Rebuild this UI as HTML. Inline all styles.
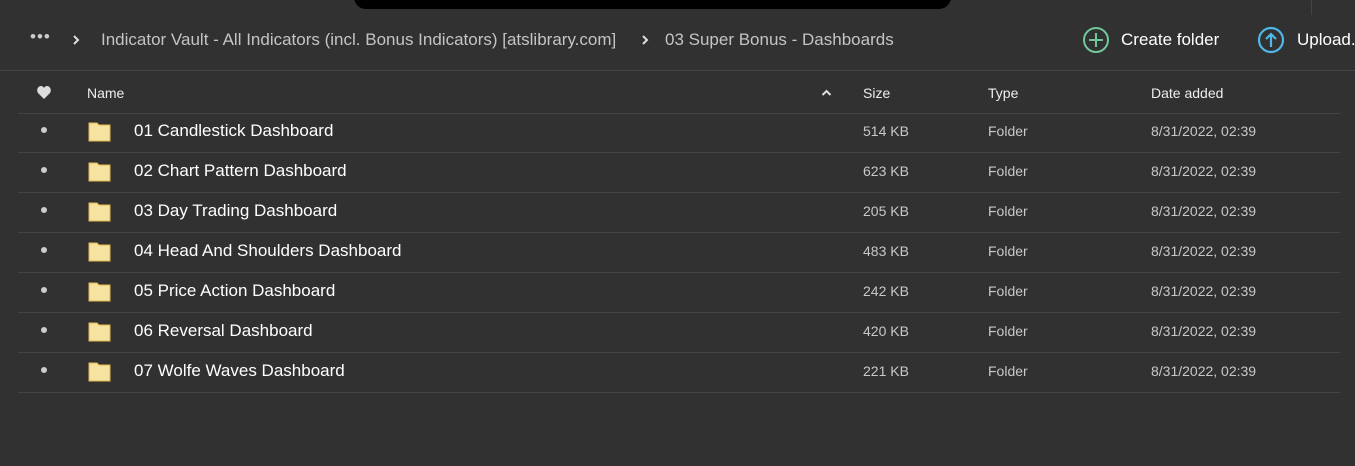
<!DOCTYPE html>
<html><head><meta charset="utf-8"><style>
body{margin:0;width:1355px;height:466px;background:#313131;font-family:"Liberation Sans",sans-serif;position:relative;overflow:hidden;color:#fff}
.pill{position:absolute;left:354px;top:-20px;width:597px;height:29px;background:#000;border-radius:12px}
.vl{position:absolute;left:1311px;top:0;width:1px;height:15px;background:#444}
.crumb{position:absolute;top:30px;font-size:17px;color:#c4c4c4;white-space:nowrap}
.hl{position:absolute;height:1px;background:#444}
.h{position:absolute;top:85px;font-size:14px;color:#eee}
.r{position:absolute;left:0;width:1355px;height:40px}
.r span{position:absolute;top:11px;white-space:nowrap}
.n{left:134px;font-size:17px;color:#fff;top:9px!important}
.s{font-size:14px;color:#c8c8c8;top:11px!important}
.dot{position:absolute;left:41px;top:15px;width:6px;height:6px;border-radius:50%;background:#ccc}
.f{position:absolute;left:88px;top:9px;width:23px;height:21px}
</style></head><body>
<div class="pill"></div><div class="vl"></div>
<div class="crumb" style="left:30px;top:27px;color:#ccc;letter-spacing:1px">•••</div>
<svg style="position:absolute;left:72px;top:34px" width="8" height="12" viewBox="0 0 8 12"><path d="M2 2l4 4-4 4" stroke="#ddd" stroke-width="2" fill="none"/></svg>
<div class="crumb" style="left:101px">Indicator Vault - All Indicators (incl. Bonus Indicators) [atslibrary.com]</div>
<svg style="position:absolute;left:641px;top:34px" width="8" height="12" viewBox="0 0 8 12"><path d="M2 2l4 4-4 4" stroke="#ddd" stroke-width="2" fill="none"/></svg>
<div class="crumb" style="left:665px">03 Super Bonus - Dashboards</div>
<svg style="position:absolute;left:1082px;top:26px" width="28" height="28" viewBox="0 0 28 28"><circle cx="14" cy="14" r="12" fill="none" stroke="#6fc79a" stroke-width="2"/><path d="M14 7v14M7 14h14" stroke="#6fc79a" stroke-width="2"/></svg>
<div class="crumb" style="left:1121px;color:#fff">Create folder</div>
<svg style="position:absolute;left:1257px;top:26px" width="28" height="28" viewBox="0 0 28 28"><circle cx="14" cy="14" r="12" fill="none" stroke="#4fb8e8" stroke-width="2.2"/><path d="M14 21V8M9 13l5-5 5 5" stroke="#4fb8e8" stroke-width="2.2" fill="none"/></svg>
<div class="crumb" style="left:1297px;color:#fff">Upload...</div>
<div class="hl" style="left:0;width:1355px;top:70px"></div>
<svg style="position:absolute;left:37px;top:86px" width="14" height="13" viewBox="0 0 14 13"><path d="M7 13L1 7C-1 4 1 0 4 0c1.5 0 2.5 1 3 2 .5-1 1.5-2 3-2 3 0 5 4 3 7z" fill="#ddd"/></svg>
<div class="h" style="left:87px">Name</div>
<svg style="position:absolute;left:821px;top:89px" width="11" height="8" viewBox="0 0 11 8"><path d="M1.5 6l4-4 4 4" stroke="#ddd" stroke-width="2" fill="none"/></svg>
<div class="h" style="left:863px">Size</div>
<div class="h" style="left:988px">Type</div>
<div class="h" style="left:1151px">Date added</div>
<div class="hl" style="left:18px;width:1322px;top:113px"></div>
<div class="r" style="top:112px"><div class="dot"></div><svg class="f" viewBox="0 0 23 21"><path d="M1 2h8l2 2h11v16H1z" fill="#f7e3a1" stroke="#e0b84a"/></svg><span class="n">01 Candlestick Dashboard</span><span class="s" style="left:863px">514 KB</span><span class="s" style="left:988px">Folder</span><span class="s" style="left:1151px">8/31/2022, 02:39</span></div>
<div class="hl" style="left:18px;width:1322px;top:152px"></div>
<div class="r" style="top:152px"><div class="dot"></div><svg class="f" viewBox="0 0 23 21"><path d="M1 2h8l2 2h11v16H1z" fill="#f7e3a1" stroke="#e0b84a"/></svg><span class="n">02 Chart Pattern Dashboard</span><span class="s" style="left:863px">623 KB</span><span class="s" style="left:988px">Folder</span><span class="s" style="left:1151px">8/31/2022, 02:39</span></div>
<div class="hl" style="left:18px;width:1322px;top:192px"></div>
<div class="r" style="top:192px"><div class="dot"></div><svg class="f" viewBox="0 0 23 21"><path d="M1 2h8l2 2h11v16H1z" fill="#f7e3a1" stroke="#e0b84a"/></svg><span class="n">03 Day Trading Dashboard</span><span class="s" style="left:863px">205 KB</span><span class="s" style="left:988px">Folder</span><span class="s" style="left:1151px">8/31/2022, 02:39</span></div>
<div class="hl" style="left:18px;width:1322px;top:232px"></div>
<div class="r" style="top:232px"><div class="dot"></div><svg class="f" viewBox="0 0 23 21"><path d="M1 2h8l2 2h11v16H1z" fill="#f7e3a1" stroke="#e0b84a"/></svg><span class="n">04 Head And Shoulders Dashboard</span><span class="s" style="left:863px">483 KB</span><span class="s" style="left:988px">Folder</span><span class="s" style="left:1151px">8/31/2022, 02:39</span></div>
<div class="hl" style="left:18px;width:1322px;top:272px"></div>
<div class="r" style="top:272px"><div class="dot"></div><svg class="f" viewBox="0 0 23 21"><path d="M1 2h8l2 2h11v16H1z" fill="#f7e3a1" stroke="#e0b84a"/></svg><span class="n">05 Price Action Dashboard</span><span class="s" style="left:863px">242 KB</span><span class="s" style="left:988px">Folder</span><span class="s" style="left:1151px">8/31/2022, 02:39</span></div>
<div class="hl" style="left:18px;width:1322px;top:312px"></div>
<div class="r" style="top:312px"><div class="dot"></div><svg class="f" viewBox="0 0 23 21"><path d="M1 2h8l2 2h11v16H1z" fill="#f7e3a1" stroke="#e0b84a"/></svg><span class="n">06 Reversal Dashboard</span><span class="s" style="left:863px">420 KB</span><span class="s" style="left:988px">Folder</span><span class="s" style="left:1151px">8/31/2022, 02:39</span></div>
<div class="hl" style="left:18px;width:1322px;top:352px"></div>
<div class="r" style="top:352px"><div class="dot"></div><svg class="f" viewBox="0 0 23 21"><path d="M1 2h8l2 2h11v16H1z" fill="#f7e3a1" stroke="#e0b84a"/></svg><span class="n">07 Wolfe Waves Dashboard</span><span class="s" style="left:863px">221 KB</span><span class="s" style="left:988px">Folder</span><span class="s" style="left:1151px">8/31/2022, 02:39</span></div>
<div class="hl" style="left:18px;width:1322px;top:392px"></div>
</body></html>
